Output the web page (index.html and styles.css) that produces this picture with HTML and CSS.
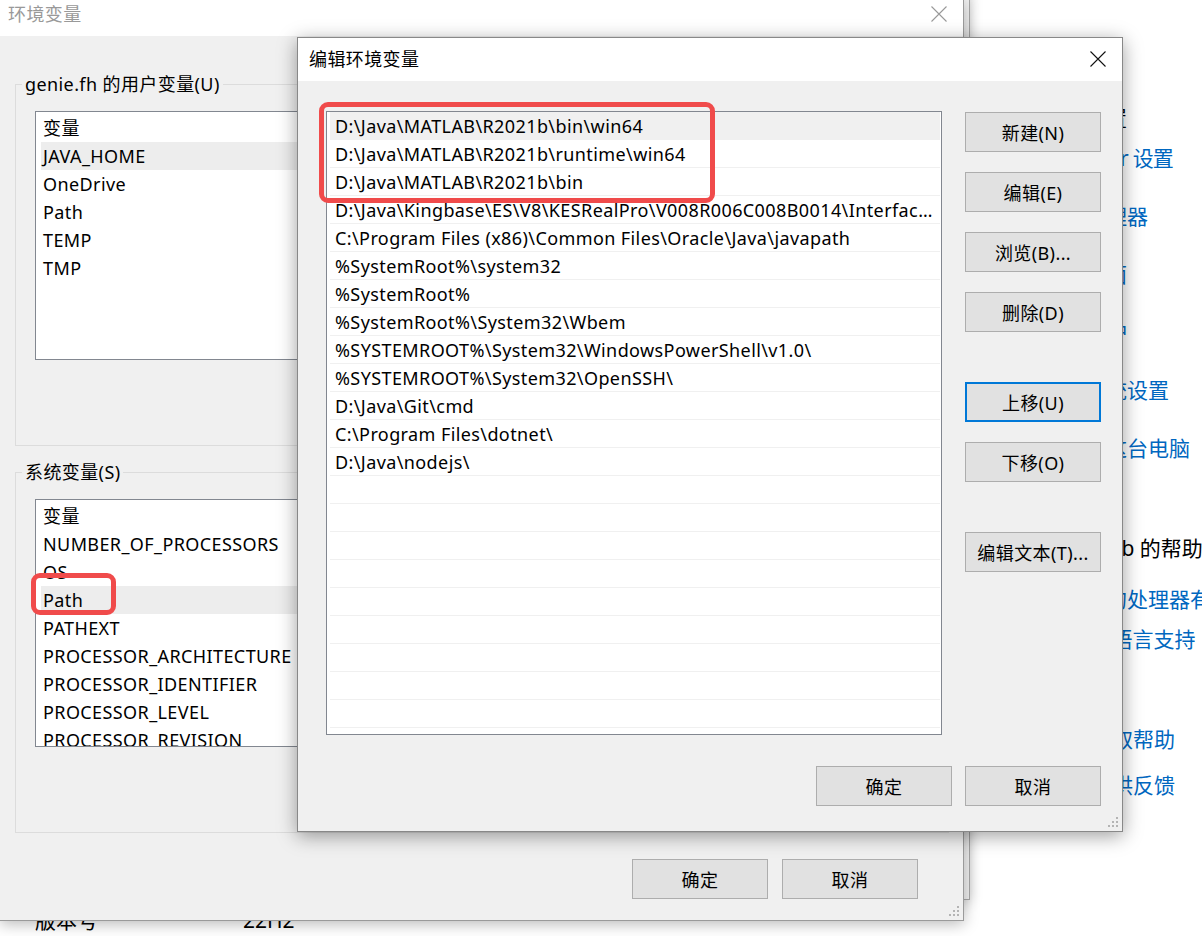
FILE: index.html
```html
<!DOCTYPE html>
<html lang="zh-CN">
<head>
<meta charset="utf-8">
<title>编辑环境变量</title>
<link rel="stylesheet" href="styles.css">
</head>
<body>
<div class="desktop">
  <div class="settings">
    <div class="spec-col">
      <div class="spec-row"><span class="spec-key">版本号</span><span class="spec-val">22H2</span></div>
    </div>
    <div class="side-col">
      <div class="s-head">相关设置</div>
      <div class="s-link first narrow">BitLocker 设置</div>
      <div class="s-link">设备管理器</div>
      <div class="s-link">远程桌面</div>
      <div class="s-link">系统保护</div>
      <div class="s-link">高级系统设置</div>
      <div class="s-link">重命名这台电脑</div>
      <div class="s-head sec2">来自 Web 的帮助</div>
      <div class="s-link first2">查找我的处理器有几个内核</div>
      <div class="s-link tight">检查 多语言支持</div>
      <div class="s-link icon sec3"><svg class="s-icon" width="20" height="20" viewBox="0 0 20 20"><circle cx="10" cy="10" r="8" fill="none" stroke="#0067c0" stroke-width="1.5"/></svg>获取帮助</div>
      <div class="s-link icon tight2"><svg class="s-icon" width="20" height="20" viewBox="0 0 20 20"><rect x="2" y="3" width="16" height="12" fill="none" stroke="#0067c0" stroke-width="1.5"/></svg>提供反馈</div>
    </div>
  </div>

  <div class="win sysprops"></div>

  <div class="win envwin">
    <div class="env-title">
      <span class="env-title-text">环境变量</span>
      <svg class="close-x" width="16" height="16" viewBox="0 0 16 16"><path d="M0.5 0.5 L15.5 15.5 M15.5 0.5 L0.5 15.5" stroke="#999" stroke-width="1.1" fill="none"/></svg>
    </div>
    <div class="env-body">
      <div class="group user">
        <div class="group-label">genie.fh 的用户变量(U)</div>
        <div class="env-list">
          <div class="env-row">变量</div>
          <div class="env-row sel">JAVA_HOME</div>
          <div class="env-row">OneDrive</div>
          <div class="env-row">Path</div>
          <div class="env-row">TEMP</div>
          <div class="env-row">TMP</div>
        </div>
      </div>
      <div class="group sys">
        <div class="group-label">系统变量(S)</div>
        <div class="env-list short">
          <div class="env-row">变量</div>
          <div class="env-row">NUMBER_OF_PROCESSORS</div>
          <div class="env-row">OS</div>
          <div class="env-row sel">Path</div>
          <div class="env-row">PATHEXT</div>
          <div class="env-row">PROCESSOR_ARCHITECTURE</div>
          <div class="env-row">PROCESSOR_IDENTIFIER</div>
          <div class="env-row">PROCESSOR_LEVEL</div>
          <div class="env-row">PROCESSOR_REVISION</div>
        </div>
      </div>
      <div class="env-actions">
        <button class="btn wide">确定</button>
        <button class="btn wide">取消</button>
      </div>
    </div>
    <svg class="grip" width="12" height="12" viewBox="0 0 12 12"><g fill="#b4b4b4"><rect x="8" y="0" width="2" height="2"/><rect x="4" y="4" width="2" height="2"/><rect x="8" y="4" width="2" height="2"/><rect x="0" y="8" width="2" height="2"/><rect x="4" y="8" width="2" height="2"/><rect x="8" y="8" width="2" height="2"/></g></svg>
  </div>

  <div class="win editwin">
    <div class="edit-title">
      <span>编辑环境变量</span>
      <svg class="close-x" width="16" height="16" viewBox="0 0 16 16"><path d="M0.5 0.5 L15.5 15.5 M15.5 0.5 L0.5 15.5" stroke="#111" stroke-width="1.1" fill="none"/></svg>
    </div>
    <div class="edit-body">
      <div class="path-list">
        <div class="path-row sel">D:\Java\MATLAB\R2021b\bin\win64</div>
        <div class="path-row">D:\Java\MATLAB\R2021b\runtime\win64</div>
        <div class="path-row">D:\Java\MATLAB\R2021b\bin</div>
        <div class="path-row">D:\Java\Kingbase\ES\V8\KESRealPro\V008R006C008B0014\Interface\jdbc\lib</div>
        <div class="path-row">C:\Program Files (x86)\Common Files\Oracle\Java\javapath</div>
        <div class="path-row">%SystemRoot%\system32</div>
        <div class="path-row">%SystemRoot%</div>
        <div class="path-row">%SystemRoot%\System32\Wbem</div>
        <div class="path-row">%SYSTEMROOT%\System32\WindowsPowerShell\v1.0\</div>
        <div class="path-row">%SYSTEMROOT%\System32\OpenSSH\</div>
        <div class="path-row">D:\Java\Git\cmd</div>
        <div class="path-row">C:\Program Files\dotnet\</div>
        <div class="path-row">D:\Java\nodejs\</div>
        <div class="path-row"></div>
        <div class="path-row"></div>
        <div class="path-row"></div>
        <div class="path-row"></div>
        <div class="path-row"></div>
        <div class="path-row"></div>
        <div class="path-row"></div>
        <div class="path-row"></div>
        <div class="path-row"></div>
        <div class="path-row"></div>
      </div>
      <div class="side-buttons">
        <button class="btn">新建(N)</button>
        <button class="btn">编辑(E)</button>
        <button class="btn">浏览(B)...</button>
        <button class="btn">删除(D)</button>
        <button class="btn focus spaced">上移(U)</button>
        <button class="btn">下移(O)</button>
        <button class="btn spaced">编辑文本(T)...</button>
      </div>
      <div class="edit-actions">
        <button class="btn wide">确定</button>
        <button class="btn wide">取消</button>
      </div>
    </div>
    <svg class="grip" width="12" height="12" viewBox="0 0 12 12"><g fill="#b4b4b4"><rect x="8" y="0" width="2" height="2"/><rect x="4" y="4" width="2" height="2"/><rect x="8" y="4" width="2" height="2"/><rect x="0" y="8" width="2" height="2"/><rect x="4" y="8" width="2" height="2"/><rect x="8" y="8" width="2" height="2"/></g></svg>
  </div>

  <div class="mark mark-a"></div>
  <div class="mark mark-b"></div>
</div>
</body>
</html>
```

FILE: styles.css
```css
* { box-sizing: border-box; }
html, body { margin: 0; padding: 0; }
body {
  width: 1202px;
  height: 936px;
  overflow: hidden;
  background: #fff;
  font-family: "Noto Sans", "Noto Sans CJK SC", sans-serif;
  font-size: 18px;
  letter-spacing: 0.4px;
  color: #000;
}
.desktop { position: relative; width: 1202px; height: 936px; overflow: hidden; }

/* settings page behind the dialogs */
.settings {
  display: grid;
  grid-template-columns: 1043px 1fr;
  font-size: 21px;
  line-height: 28px;
  letter-spacing: 0;
  white-space: nowrap;
}
.spec-col { padding: 906px 0 0 35px; }
.spec-row { display: flex; }
.spec-key { width: 208px; }
.side-col { padding-top: 104px; }
.s-head { color: #000; }
.s-link { color: #0067c0; margin-top: 30px; display: flex; align-items: center; }
.s-link.narrow { letter-spacing: -0.8px; }
.s-link.first { margin-top: 12px; }
.s-head.sec2 { margin-top: 72px; }
.s-link.first2 { margin-top: 23px; }
.s-link.tight { margin-top: 12px; }
.s-link.sec3 { margin-top: 72px; }
.s-link.tight2 { margin-top: 18px; }
.s-icon { margin-right: 28px; flex: none; }

/* windows */
.win { position: absolute; background: #f0f0f0; }
.sysprops {
  left: -10px; top: -10px; width: 980px; height: 910px;
  border: 1px solid #a8a8a8;
  box-shadow: 0 2px 12px rgba(0,0,0,0.22);
}
.envwin {
  left: 0; top: 0; width: 964px; height: 921px;
  border-right: 1px solid #9a9a9a;
  border-bottom: 1px solid #9a9a9a;
  box-shadow: 0 3px 14px rgba(0,0,0,0.28);
  display: flex; flex-direction: column;
}
.env-title {
  height: 36px; background: #fff;
  display: flex; justify-content: space-between; align-items: flex-start;
  padding: 0 16px 0 8px;
  color: #999;
  line-height: 28px;
}
.env-title .close-x { margin-top: 6px; }
.env-body { flex: 1; padding: 48px 0 0 15px; }
.group { border: 1px solid #dcdcdc; width: 934px; padding: 0 0 0 19px; }
.group.user { height: 362px; }
.group.sys { height: 361px; margin-top: 26px; }
.group-label {
  margin: -13px 0 0 -13px; padding: 0 3px;
  width: max-content; background: #f0f0f0; line-height: 24px;
}
.env-list {
  margin-top: 15px; width: 894px; height: 249px;
  border: 1px solid #828790; background: #fff;
  padding: 2px 0 0 5px; overflow: hidden;
}
.env-list.short { height: 248px; }
.env-row { height: 28px; line-height: 28px; padding-left: 2px; white-space: nowrap; }
.env-row.sel { background: #ededed; }
.env-actions { display: flex; justify-content: flex-end; gap: 14px; margin-top: 26px; padding-right: 45px; }

.grip { position: absolute; right: 2px; bottom: 2px; }

.editwin {
  left: 297px; top: 37px; width: 826px; height: 795px;
  border: 1px solid #888;
  box-shadow: 0 4px 18px rgba(0,0,0,0.38);
  display: flex; flex-direction: column;
}
.edit-title {
  height: 43px; background: #fff;
  display: flex; justify-content: space-between; align-items: center;
  padding: 0 16px 4px 11px;
}
.edit-title .close-x { margin-top: 3px; }
.edit-body {
  flex: 1;
  display: grid;
  grid-template-columns: 616px 136px;
  column-gap: 23px;
  align-content: start;
  padding: 30px 21px 0 28px;
}
.path-list {
  height: 624px; border: 1px solid #828790; background: #fff; overflow: hidden;
}
.path-row {
  height: 28px; line-height: 27px;
  padding: 1px 4px 0 5px;
  border-bottom: 1px solid #f0f0f0;
  margin: 0 1px 0 3px;
  white-space: nowrap; overflow: hidden; text-overflow: ellipsis;
}
.path-row.sel { background: #f0f0f0; }
.side-buttons { display: flex; flex-direction: column; gap: 20px; padding-top: 1px; }
.side-buttons .spaced { margin-top: 30px; }
.edit-actions { grid-column: 1 / -1; display: flex; justify-content: flex-end; gap: 13px; margin-top: 31px; }

.btn {
  height: 40px; width: 136px;
  background: #e1e1e1; border: 1px solid #adadad;
  font: inherit; color: #000; letter-spacing: inherit;
  display: flex; align-items: center; justify-content: center;
  padding: 0; margin: 0;
}
.btn.focus { border: 2px solid #0078d7; }

/* annotation marks */
.mark { position: absolute; border: 5px solid #f04b4b; border-radius: 9px; }
.mark-a { left: 319px; top: 102px; width: 396px; height: 101px; }
.mark-b { left: 31px; top: 573px; width: 85px; height: 42px; }
```
